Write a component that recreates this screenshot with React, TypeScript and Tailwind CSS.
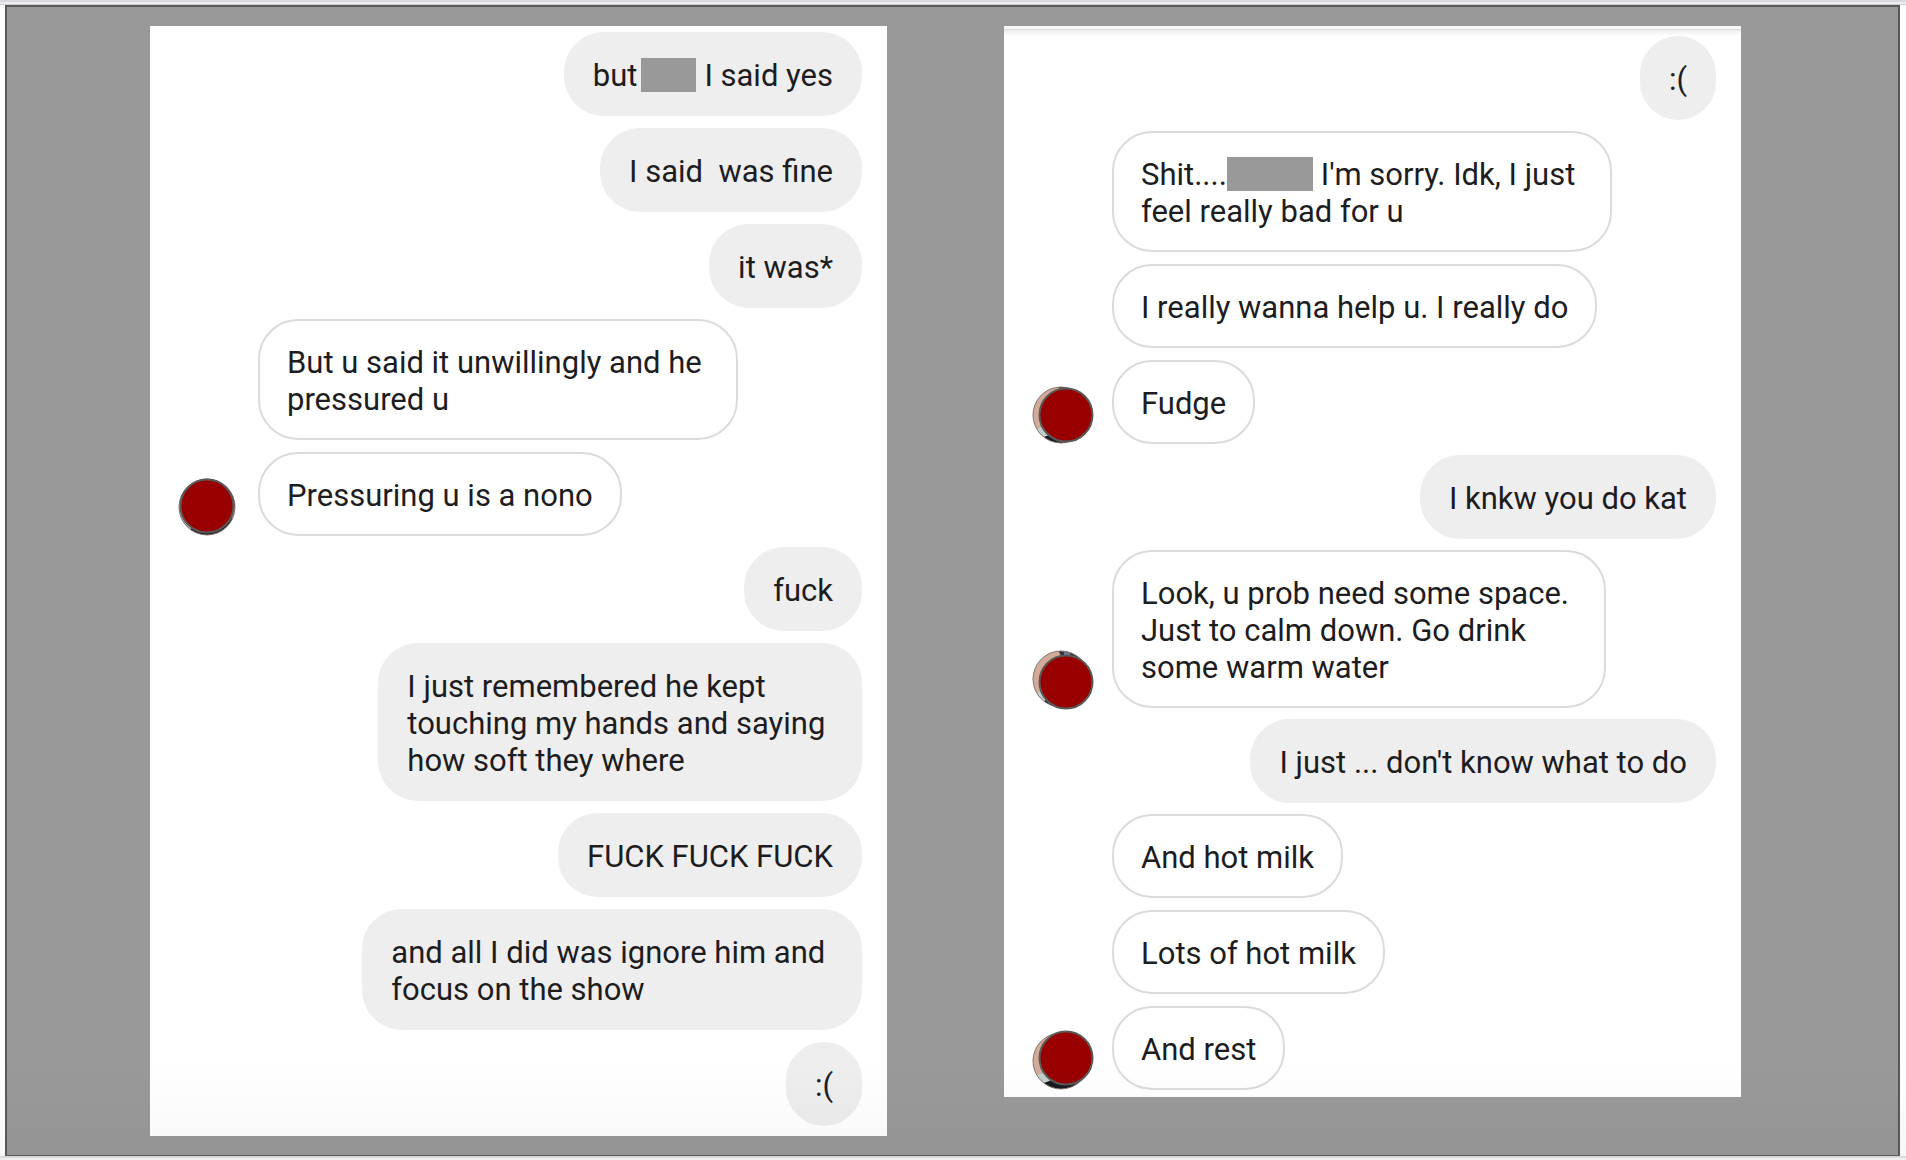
import { Fragment } from "react"
import clsx from "clsx"

type Message = {
  from: "me" | "them"
  // "█" marks a hidden name, its width comes from `redacted`
  text: string
  redacted?: "short" | "long"
  avatar?: "full" | "low" | "mid" | "high"
}

const leftMessages: Message[] = [
  { from: "me", text: "but█I said yes", redacted: "short" },
  { from: "me", text: "I said  was fine" },
  { from: "me", text: "it was*" },
  { from: "them", text: "But u said it unwillingly and he \npressured u" },
  { from: "them", text: "Pressuring u is a nono", avatar: "full" },
  { from: "me", text: "fuck" },
  { from: "me", text: "I just remembered he kept \ntouching my hands and saying \nhow soft they where" },
  { from: "me", text: "FUCK FUCK FUCK" },
  { from: "me", text: "and all I did was ignore him and \nfocus on the show" },
  { from: "me", text: ":(" },
]

const rightMessages: Message[] = [
  { from: "me", text: ":(" },
  { from: "them", text: "Shit....█I'm sorry. Idk, I just \nfeel really bad for u", redacted: "long" },
  { from: "them", text: "I really wanna help u. I really do" },
  { from: "them", text: "Fudge", avatar: "mid" },
  { from: "me", text: "I knkw you do kat" },
  { from: "them", text: "Look, u prob need some space. \nJust to calm down. Go drink \nsome warm water", avatar: "low" },
  { from: "me", text: "I just ... don't know what to do" },
  { from: "them", text: "And hot milk" },
  { from: "them", text: "Lots of hot milk" },
  { from: "them", text: "And rest", avatar: "high" },
]

const coverSpots = {
  full: { cx: 29, cy: 30 },
  mid: { cx: 34, cy: 31 },
  low: { cx: 34, cy: 34 },
  high: { cx: 34, cy: 28 },
}

function Avatar({ kind }: { kind: keyof typeof coverSpots }) {
  const { cx, cy } = coverSpots[kind]
  const id = `photo-${kind}`
  return (
    <svg viewBox="0 0 62 60" className="block h-[60px] w-[62px] overflow-visible" aria-hidden="true">
      <clipPath id={id}>
        <circle cx="29" cy="31" r="28" />
      </clipPath>
      <g clipPath={`url(#${id})`}>
        <rect width="62" height="60" fill="#d3aa98" />
        <path d="M25 0H62V30H40Z" fill="#3b3033" />
        <path d="M32 4h6v4h-6z" fill="#62799a" />
        <path d="M4 45L12 43L24 60H4Z" fill="#c3cecb" />
        <path d="M12 53L20 50L62 40V60H16Z" fill="#17191f" />
      </g>
      <circle cx="29" cy="31" r="28" fill="none" stroke="#84736d" strokeWidth="1" />
      <circle cx={cx} cy={cy} r="26.5" fill="#980000" stroke="#595959" strokeWidth="2" />
    </svg>
  )
}

function Redaction({ size }: { size?: "short" | "long" }) {
  return (
    <span
      className={clsx(
        "inline-block h-[34px] bg-[#999999] align-[-6px]",
        size === "long" ? "mr-2 w-[86px]" : "mr-2 ml-1 w-[55px]"
      )}
    />
  )
}

function Bubble({ message }: { message: Message }) {
  const lines = message.text.split("\n")
  return (
    <p
      className={clsx(
        "rounded-[40px] border-2 px-[27px] whitespace-pre text-[#1d1d1f]",
        "pt-[23px] pb-5 text-[31px] leading-[37px]",
        message.from === "me" ? "border-[#eeeeee] bg-[#eeeeee]" : "border-[#dbdbdb] bg-white"
      )}
    >
      {lines.map((line, n) => (
        <span key={n} className="block">
          {line.split("█").map((part, i) => (
            <Fragment key={i}>
              {i > 0 && <Redaction size={message.redacted} />}
              {part}
            </Fragment>
          ))}
        </span>
      ))}
    </p>
  )
}

function Thread({ messages, label }: { messages: Message[]; label: string }) {
  return (
    <ul aria-label={label} className="flex flex-col pr-[25px] pl-7">
      {messages.map((message, i) => {
        const previous = messages[i - 1]
        return (
          <li
            key={i}
            className={clsx(
              "flex items-end",
              message.from === "me" && "justify-end",
              previous && (previous.from === message.from ? "mt-3" : "mt-[11px]")
            )}
          >
            {message.from === "them" && (
              <div className="w-20 shrink-0">{message.avatar && <Avatar kind={message.avatar} />}</div>
            )}
            <Bubble message={message} />
          </li>
        )
      })}
    </ul>
  )
}

export default function App() {
  return (
    <div className="relative bg-white pr-[6px] pl-[5px] font-[Roboto,sans-serif]">
      <div className="-mr-[6px] -ml-[5px]">
        <div className="h-[2px] bg-[#d9dae0]" />
        <div className="h-[2px] bg-[#eeeeee]" />
        <div className="h-px bg-[#cccccc]" />
      </div>

      <main className="flex items-start gap-[117px] border-2 border-b border-[#595959] bg-[#999999] pt-[19px] pr-[157px] pb-[19px] pl-[143px]">
        <section className="min-w-0 flex-1 bg-white pt-[6px] pb-[10px]">
          <Thread messages={leftMessages} label="First part of the chat" />
        </section>
        <section className="min-w-0 flex-1 bg-white pb-[7px]">
          <div className="h-[3px] bg-[#f8f8f8]" />
          <div className="h-[7px] border-t border-[#dddddd] bg-linear-to-b from-[#eeeeee] to-white" />
          <Thread messages={rightMessages} label="Second part of the chat" />
        </section>
      </main>

      <div className="-mr-[6px] -ml-[5px]">
        <div className="h-[2px] bg-[#d9d9d9]" />
        <div className="h-[2px] bg-[#f0f0f0]" />
      </div>

      {/* soft shade along the bottom edge */}
      <div className="pointer-events-none absolute inset-x-0 bottom-1 h-24 bg-linear-to-b from-transparent to-black/3" />
    </div>
  )
}
